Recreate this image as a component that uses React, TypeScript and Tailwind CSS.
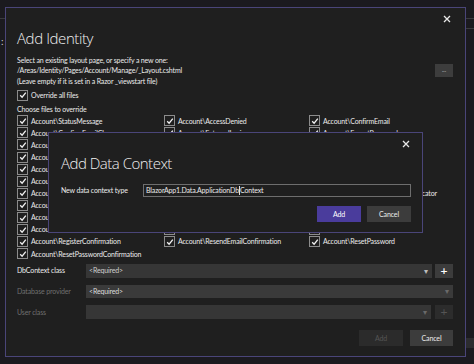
import React from "react";

const files = [
  "StatusMessage", "AccessDenied", "ConfirmEmail",
  "ConfirmEmailChange", "ExternalLogin", "ForgotPassword",
  "ForgotPasswordConfirmation", "Lockout", "Login",
  "LoginWith2fa", "LoginWithRecoveryCode", "Logout",
  "Manage\\_Layout", "Manage\\ManageNav", "Manage\\StatusMessage",
  "Manage\\ChangePassword", "Manage\\DeletePersonalData", "Manage\\Disable2fa",
  "Manage\\DownloadPersonalData", "Manage\\Email", "Manage\\EnableAuthenticator",
  "Manage\\ExternalLogins", "Manage\\GenerateRecoveryCodes", "Manage\\Index",
  "Manage\\PersonalData", "Manage\\ResetAuthenticator", "Manage\\SetPassword",
  "Manage\\ShowRecoveryCodes", "Manage\\TwoFactorAuthentication", "Register",
  "RegisterConfirmation", "ResendEmailConfirmation", "ResetPassword",
  "ResetPasswordConfirmation",
];

function Check() {
  return (
    <span className="flex h-[11px] w-[11px] shrink-0 items-center justify-center border border-[#8c8c8c] bg-[#1f1f1f]">
      <svg width="8" height="8" viewBox="0 0 8 8" fill="none">
        <path d="M1.2 4.3 L3.1 6.2 L6.8 1.6" stroke="#f2f2f2" strokeWidth="1.3" />
      </svg>
    </span>
  );
}

function CloseX() {
  return (
    <svg width="8" height="8" viewBox="0 0 8 8">
      <path d="M1 1 L7 7 M7 1 L1 7" stroke="#e8e8e8" strokeWidth="1.3" />
    </svg>
  );
}

function Caret({ dim }: { dim?: boolean }) {
  return (
    <span className={`text-[8px] leading-none ${dim ? "text-[#6a6a6a]" : "text-[#bdbdbd]"}`}>▾</span>
  );
}

export default function App() {
  return (
    <div
      className="relative h-[364px] w-[474px] overflow-hidden bg-[#1b1a1f] text-[#ececec] tracking-[-0.15px]"
      style={{ fontFamily: 'Lato, "Open Sans", sans-serif' }}
    >
      {/* background app bits */}
      <div className="absolute left-0 top-[18px] h-px w-[5px] bg-[#3a3a3e]" />
      <div className="absolute left-[1px] top-[36px] text-[10px] leading-none text-[#cfcfcf]">:</div>
      <div className="absolute right-0 top-[18px] h-px w-[8px] bg-[#3a3a3e]" />
      <div className="absolute right-0 top-[28px] h-px w-[8px] bg-[#3a3a3e]" />
      <div className="absolute right-0 top-[338px] h-[10px] w-[8px] bg-[#2c2c2f]" />

      {/* Add Identity dialog */}
      <div className="absolute left-[5px] top-[7px] flex h-[350px] w-[461px] flex-col border border-[#4a4579] bg-[#1f1f1f] pb-[10px] pl-[11px] pr-[12px]">
        <div className="mt-[4px] flex h-[14px] items-center justify-end pr-[2px]">
          <CloseX />
        </div>
        <div className="mt-[2px] h-[20px] text-[15px] font-light leading-[20px] tracking-[-0.4px] text-[#f0f0f0]" style={{ fontFamily: '"Open Sans", sans-serif' }}>
          Add Identity
        </div>

        <div className="mt-[7px] flex items-center justify-between text-[7px] leading-[10.5px]">
          <div>
            <div>Select an existing layout page, or specify a new one:</div>
            <div>/Areas/Identity/Pages/Account/Manage/_Layout.cshtml</div>
            <div>(Leave empty if it is set in a Razor _viewstart file)</div>
          </div>
          <div className="flex h-[13px] w-[18px] items-center justify-center bg-[#3d3d3d] text-[6px] leading-none tracking-[0px] text-[#cfcfcf]">
            ...
          </div>
        </div>

        <div className="mt-[3px] flex h-[12px] items-center gap-[3px] text-[7px]">
          <Check />
          <span>Override all files</span>
        </div>
        <div className="mt-[2px] flex h-[12px] items-center text-[7px]">Choose files to override</div>

        <div className="grid grid-cols-[147px_145px_1fr] auto-rows-[12.1px] text-[7px]">
          {files.map((f) => (
            <div key={f} className="flex items-center gap-[3px] whitespace-nowrap">
              <Check />
              <span>Account\{f}</span>
            </div>
          ))}
        </div>

        <div className="mt-[4px] flex h-[14px] items-center text-[7px]">
          <span className="w-[69px]">DbContext class</span>
          <div className="flex h-full flex-1 items-center justify-between bg-[#363636] pl-[3px] pr-[4px]">
            <span className="text-[#cfcfcf]">&lt;Required&gt;</span>
            <Caret />
          </div>
          <div className="ml-[3px] flex h-full w-[18px] items-center justify-center bg-[#3c3c3c] text-[12px] font-semibold leading-none text-white">
            +
          </div>
        </div>

        <div className="mt-[7px] flex h-[14px] items-center text-[7px]">
          <span className="w-[69px] text-[#6f6f6f]">Database provider</span>
          <div className="flex h-full flex-1 items-center justify-between bg-[#3a3a3a] pl-[3px] pr-[4px]">
            <span className="text-[#dcdcdc]">&lt;Required&gt;</span>
            <Caret dim />
          </div>
        </div>

        <div className="mt-[7px] flex h-[14px] items-center text-[7px]">
          <span className="w-[69px] text-[#6f6f6f]">User class</span>
          <div className="flex h-full flex-1 items-center justify-end bg-[#363636] pr-[4px]">
            <Caret dim />
          </div>
          <div className="ml-[4px] flex h-full w-[18px] items-center justify-center bg-[#2c2c2c] text-[12px] leading-none text-[#555]">
            +
          </div>
        </div>

        <div className="mt-[11px] flex justify-end gap-[7px] text-[7px]">
          <div className="flex h-[16px] w-[44px] items-center justify-center bg-[#2b2b2b] text-[#555]">Add</div>
          <div className="flex h-[16px] w-[43px] items-center justify-center bg-[#3c3c3c] text-[#ececec]">Cancel</div>
        </div>
      </div>

      {/* Add Data Context dialog */}
      <div className="absolute left-[48px] top-[132px] flex h-[101px] w-[375px] flex-col border border-[#4a4579] bg-[#1f1f1f] pl-[12px] pr-[11px]">
        <div className="mt-[6px] flex h-[10px] items-center justify-end pr-[1px]">
          <CloseX />
        </div>
        <div className="mt-[4px] h-[20px] text-[15px] font-light leading-[20px] tracking-[-0.5px] text-[#f0f0f0]" style={{ fontFamily: '"Open Sans", sans-serif' }}>
          Add Data Context
        </div>
        <div className="mt-[11px] flex h-[13px] items-center text-[7px]">
          <span className="w-[82px] whitespace-nowrap">New data context type</span>
          <div className="flex h-full flex-1 items-center border border-[#6e6e6e] bg-[#1f1f1f] pl-[2px]">
            <span>BlazorApp1.Data.ApplicationDb</span>
            <span className="h-[9px] w-px bg-[#e0e0e0]" />
            <span>Context</span>
          </div>
        </div>
        <div className="mt-[9px] flex justify-end gap-[6px] text-[7px]">
          <div className="flex h-[16px] w-[44px] items-center justify-center bg-[#4a3c9c] text-white">Add</div>
          <div className="flex h-[16px] w-[44px] items-center justify-center bg-[#3c3c3c] text-[#ececec]">Cancel</div>
        </div>
      </div>
    </div>
  );
}
